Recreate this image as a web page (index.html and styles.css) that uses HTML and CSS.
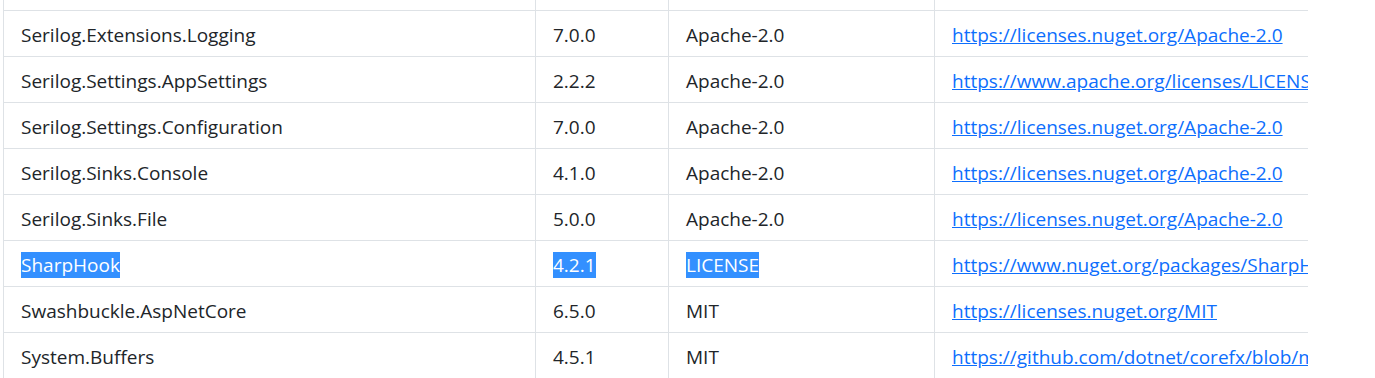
FILE: index.html
```html
<!DOCTYPE html>
<html lang="en">
<head>
<meta charset="utf-8">
<title>Licenses</title>
<link rel="stylesheet" href="styles.css">
</head>
<body>
<div class="viewport">
  <table class="licenses">
    <colgroup>
      <col class="c-name"><col class="c-ver"><col class="c-lic"><col class="c-url">
    </colgroup>
    <tbody>
      <tr><td>Serilog.Extensions.Hosting</td><td>7.0.0</td><td>Apache-2.0</td><td><a href="#">https://licenses.nuget.org/Apache-2.0</a></td></tr>
      <tr><td>Serilog.Extensions.Logging</td><td>7.0.0</td><td>Apache-2.0</td><td><a href="#">https://licenses.nuget.org/Apache-2.0</a></td></tr>
      <tr><td>Serilog.Settings.AppSettings</td><td>2.2.2</td><td>Apache-2.0</td><td><a href="#">https://www.apache.org/licenses/LICENSE-2.0</a></td></tr>
      <tr><td>Serilog.Settings.Configuration</td><td>7.0.0</td><td>Apache-2.0</td><td><a href="#">https://licenses.nuget.org/Apache-2.0</a></td></tr>
      <tr><td>Serilog.Sinks.Console</td><td>4.1.0</td><td>Apache-2.0</td><td><a href="#">https://licenses.nuget.org/Apache-2.0</a></td></tr>
      <tr><td>Serilog.Sinks.File</td><td>5.0.0</td><td>Apache-2.0</td><td><a href="#">https://licenses.nuget.org/Apache-2.0</a></td></tr>
      <tr><td><span class="sel">SharpHook</span></td><td><span class="sel">4.2.1</span></td><td><span class="sel">LICENSE</span></td><td><a href="#">https://www.nuget.org/packages/SharpHook/4.2.1/License</a></td></tr>
      <tr><td>Swashbuckle.AspNetCore</td><td>6.5.0</td><td>MIT</td><td><a href="#">https://licenses.nuget.org/MIT</a></td></tr>
      <tr><td>System.Buffers</td><td>4.5.1</td><td>MIT</td><td><a href="#">https://github.com/dotnet/corefx/blob/master/LICENSE.TXT</a></td></tr>
    </tbody>
  </table>
</div>
</body>
</html>
```

FILE: styles.css
```css
html, body {
  margin: 0;
  padding: 0;
  background: #ffffff;
}
body {
  font-family: "Open Sans", "Noto Sans", sans-serif;
  font-size: 19px;
  color: #212529;
  height: 378px;
  overflow: hidden;
}
.viewport {
  margin-left: 3px;
  width: 1305px;
  overflow: hidden;
}
.licenses {
  border-collapse: collapse;
  table-layout: fixed;
  width: 1500px;
  margin-top: -35px;
}
.c-name { width: 532px; }
.c-ver { width: 133px; }
.c-lic { width: 266px; }
.c-url { width: 569px; }
.licenses td {
  border: 1px solid #dee2e6;
  padding: 11px 17px 7px;
  line-height: 27px;
  height: 27px;
  white-space: nowrap;
  overflow: hidden;
  vertical-align: middle;
}
.licenses tr:first-child td { border-top: none; }
.licenses td:last-child { border-right: none; }
.licenses a {
  color: #0d6efd;
  text-decoration: underline;
}
.sel {
  background: #3390ff;
  color: #ffffff;
}
```
